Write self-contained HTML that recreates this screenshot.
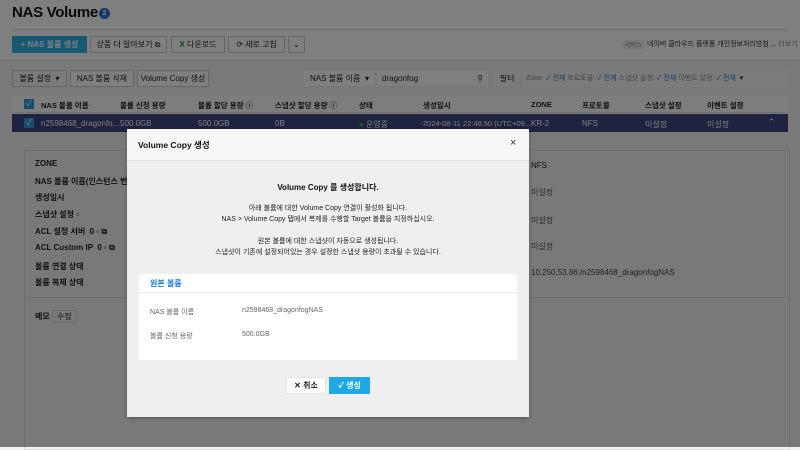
<!DOCTYPE html>
<html><head><meta charset="utf-8"><style>
*{box-sizing:border-box;margin:0;padding:0}
body{width:800px;height:447px;overflow:hidden;position:relative;background:#f3f3f3;font-family:"Liberation Sans","Noto Sans CJK KR",sans-serif;font-size:8px;color:#222}
.a{position:absolute;white-space:nowrap}
.btn{position:absolute;height:17px;border:1px solid #ccc;background:#fff;font-size:8px;display:flex;align-items:center;justify-content:center;color:#222}
.ov{position:absolute;left:0;top:0;width:800px;height:447px;background:rgba(0,0,0,0.5)}
.lbl{position:absolute;left:35px;font-weight:bold;font-size:8px}
</style></head><body>
<div class="a" style="left:0;top:0;width:800px;height:59px;background:#fff"></div>
<div class="a" style="left:12px;top:4px;font-size:15px;font-weight:bold;color:#111;letter-spacing:-0.3px">NAS Volume</div>
<div class="a" style="left:99px;top:8px;width:11px;height:11px;border-radius:50%;background:#2a6fd6;color:#fff;font-size:7px;text-align:center;line-height:11px;font-weight:bold">2</div>
<div class="a" style="left:12px;top:29px;width:776px;height:1px;background:#ddd"></div>
<div class="btn" style="left:12px;top:36px;width:75px;background:#2fb0e8;border-color:#2fb0e8;color:#fff;font-weight:bold">+ NAS 볼륨 생성</div>
<div class="btn" style="left:90px;top:36px;width:77px">상품 더 알아보기 ⧉</div>
<div class="btn" style="left:171px;top:36px;width:54px"><span style="color:#1a8a3a;font-weight:bold">X</span>&nbsp;다운로드</div>
<div class="btn" style="left:228px;top:36px;width:57px">⟳ 새로 고침</div>
<div class="btn" style="left:288px;top:36px;width:17px">⌄</div>
<div class="a" style="left:622px;top:40px;font-size:6px;color:#888;background:#eee;border-radius:5px;padding:0 3px">서비스</div>
<div class="a" style="left:647px;top:39px;font-size:7px;color:#333">네이버 클라우드 플랫폼 개인정보처리방침 ... <span style="color:#888">더보기</span></div>

<div class="btn" style="left:12px;top:70px;width:55px;background:#f6f6f6">볼륨 설정 &nbsp;▾</div>
<div class="btn" style="left:70px;top:70px;width:64px">NAS 볼륨 삭제</div>
<div class="btn" style="left:137px;top:70px;width:72px">Volume Copy 생성</div>
<div class="btn" style="left:303px;top:70px;width:73px;justify-content:space-between;padding:0 6px;border-color:#f0f0f0">NAS 볼륨 이름 <span>▾</span></div>
<div class="btn" style="left:376px;top:70px;width:113px;justify-content:space-between;padding:0 5px;border-color:#f0f0f0"><span>dragonfog</span><span>⚲</span></div>
<div class="btn" style="left:493px;top:70px;width:28px;background:#f6f6f6;border-color:#eee">필터</div>
<div class="a" style="left:521px;top:70px;width:267px;height:17px;background:#f6f6f6;font-size:7px;line-height:17px;padding-left:5px;color:#888">Zone: <span style="color:#2a7fd0">✓ 전체</span> 프로토콜: <span style="color:#2a7fd0">✓ 전체</span> 스냅샷 설정: <span style="color:#2a7fd0">✓ 전체</span> 이벤트 설정: <span style="color:#2a7fd0">✓ 전체</span> &nbsp;<span style="color:#222">▾</span></div>

<div class="a" style="left:12px;top:96px;width:776px;height:17px;background:#fafafa;border-bottom:1px solid #ddd"></div>
<div class="a" style="left:24px;top:99px;width:10px;height:10px;background:#2fa0dc;color:#fff;font-size:8px;line-height:10px;text-align:center">✓</div>
<div class="a" style="top:100px;left:41px;font-weight:bold;font-size:7.5px">NAS 볼륨 이름</div>
<div class="a" style="top:100px;left:120px;font-weight:bold;font-size:7.5px">볼륨 신청 용량</div>
<div class="a" style="top:100px;left:198px;font-weight:bold;font-size:7.5px">볼륨 할당 용량 ⓘ</div>
<div class="a" style="top:100px;left:275px;font-weight:bold;font-size:7.5px">스냅샷 할당 용량 ⓘ</div>
<div class="a" style="top:100px;left:359px;font-weight:bold;font-size:7.5px">상태</div>
<div class="a" style="top:100px;left:423px;font-weight:bold;font-size:7.5px">생성일시</div>
<div class="a" style="top:100px;left:531px;font-weight:bold;font-size:7.5px">ZONE</div>
<div class="a" style="top:100px;left:582px;font-weight:bold;font-size:7.5px">프로토콜</div>
<div class="a" style="top:100px;left:645px;font-weight:bold;font-size:7.5px">스냅샷 설정</div>
<div class="a" style="top:100px;left:707px;font-weight:bold;font-size:7.5px">이벤트 설정</div>
<div class="a" style="left:12px;top:114px;width:776px;height:18px;background:#3c4680;color:#fff"></div>
<div class="a" style="left:24px;top:118px;width:10px;height:10px;background:#2fa0dc;color:#fff;font-size:8px;line-height:10px;text-align:center">✓</div>
<div class="a" style="top:119px;left:41px;color:#fff">n2598468_dragonfo...</div>
<div class="a" style="top:119px;left:120px;color:#fff">500.0GB</div>
<div class="a" style="top:119px;left:198px;color:#fff">500.0GB</div>
<div class="a" style="top:119px;left:275px;color:#fff">0B</div>
<div class="a" style="top:119px;left:359px;color:#fff"><span style="color:#2c2">●</span> 운영중</div>
<div class="a" style="top:119px;left:423px;color:#fff;font-size:7.5px">2024-08-11 22:48:50 (UTC+09...</div>
<div class="a" style="top:119px;left:531px;color:#fff">KR-2</div>
<div class="a" style="top:119px;left:582px;color:#fff">NFS</div>
<div class="a" style="top:119px;left:645px;color:#fff">미설정</div>
<div class="a" style="top:119px;left:707px;color:#fff">미설정</div>
<div class="a" style="top:117px;left:768px;color:#fff;font-size:9px">⌃</div>

<div class="a" style="left:24px;top:150px;width:766px;height:300px;border:1px solid #ddd"></div>
<div class="a" style="left:24px;top:297px;width:766px;height:1px;background:#ddd"></div>
<div class="lbl" style="top:159px">ZONE</div>
<div class="lbl" style="top:176px">NAS 볼륨 이름(인스턴스 번호)</div>
<div class="lbl" style="top:192px">생성일시</div>
<div class="lbl" style="top:209px">스냅샷 설정 ▫</div>
<div class="lbl" style="top:226px">ACL 설정 서버 &nbsp;0 ▫ ⧉</div>
<div class="lbl" style="top:243px">ACL Custom IP &nbsp;0 ▫ ⧉</div>
<div class="lbl" style="top:261px">볼륨 연결 상태</div>
<div class="lbl" style="top:277px">볼륨 복제 상태</div>
<div class="lbl" style="top:311px">메모 <span style="font-weight:normal;border:1px solid #ddd;padding:1px 4px">수정</span></div>
<div class="a" style="left:531px;top:161px">NFS</div>
<div class="a" style="left:531px;top:187px;color:#555">미설정</div>
<div class="a" style="left:531px;top:215px;color:#555">미설정</div>
<div class="a" style="left:531px;top:241px;color:#555">미설정</div>
<div class="a" style="left:531px;top:268px;color:#444">10.250.53.86:/n2598468_dragonfogNAS</div>

<div class="ov"></div>

<div class="a" style="left:127px;top:129px;width:402px;height:288px;background:#efefef;box-shadow:0 1px 4px rgba(0,0,0,.3)">
 <div class="a" style="left:0;top:0;width:402px;height:32px;background:#f6f6f6;border-bottom:1px solid #e2e2e2"></div>
 <div class="a" style="left:11px;top:10px;font-size:8.5px;font-weight:bold;color:#111">Volume Copy 생성</div>
 <div class="a" style="left:383px;top:8px;font-size:11px;color:#333">×</div>
 <div class="a" style="left:0;width:402px;top:53px;text-align:center;font-weight:bold;font-size:8px;color:#111">Volume Copy 를 생성합니다.</div>
 <div class="a" style="left:0;width:402px;top:74px;text-align:center;font-size:7px;line-height:11px;color:#222">아래 볼륨에 대한 Volume Copy 연결이 활성화 됩니다.<br>NAS &gt; Volume Copy 탭에서 복제를 수행할 Target 볼륨을 지정하십시오.</div>
 <div class="a" style="left:0;width:402px;top:107px;text-align:center;font-size:7px;line-height:11px;color:#222">원본 볼륨에 대한 스냅샷이 자동으로 생성됩니다.<br>스냅샷이 기존에 설정되어있는 경우 설정한 스냅샷 용량이 초과될 수 있습니다.</div>
 <div class="a" style="left:12px;top:145px;width:378px;height:86px;background:#fff">
  <div class="a" style="left:0;top:0;width:378px;height:19px;border-bottom:1px solid #e8e8e8"></div>
  <div class="a" style="left:11px;top:4px;font-weight:bold;font-size:8px;color:#1d7fd0">원본 볼륨</div>
  <div class="a" style="left:11px;top:33px;font-size:7px;color:#666">NAS 볼륨 이름</div>
  <div class="a" style="left:103px;top:33px;font-size:7px;color:#666">n2598468_dragonfogNAS</div>
  <div class="a" style="left:11px;top:57px;font-size:7px;color:#666">볼륨 신청 용량</div>
  <div class="a" style="left:103px;top:57px;font-size:7px;color:#666">500.0GB</div>
 </div>
 <div class="btn" style="left:159px;top:248px;width:40px;border-color:#e5e5e5;font-weight:bold">✕ 취소</div>
 <div class="btn" style="left:202px;top:248px;width:41px;background:#1fa8e6;border-color:#1fa8e6;color:#fff;font-weight:bold">✓ 생성</div>
</div>
</body></html>
